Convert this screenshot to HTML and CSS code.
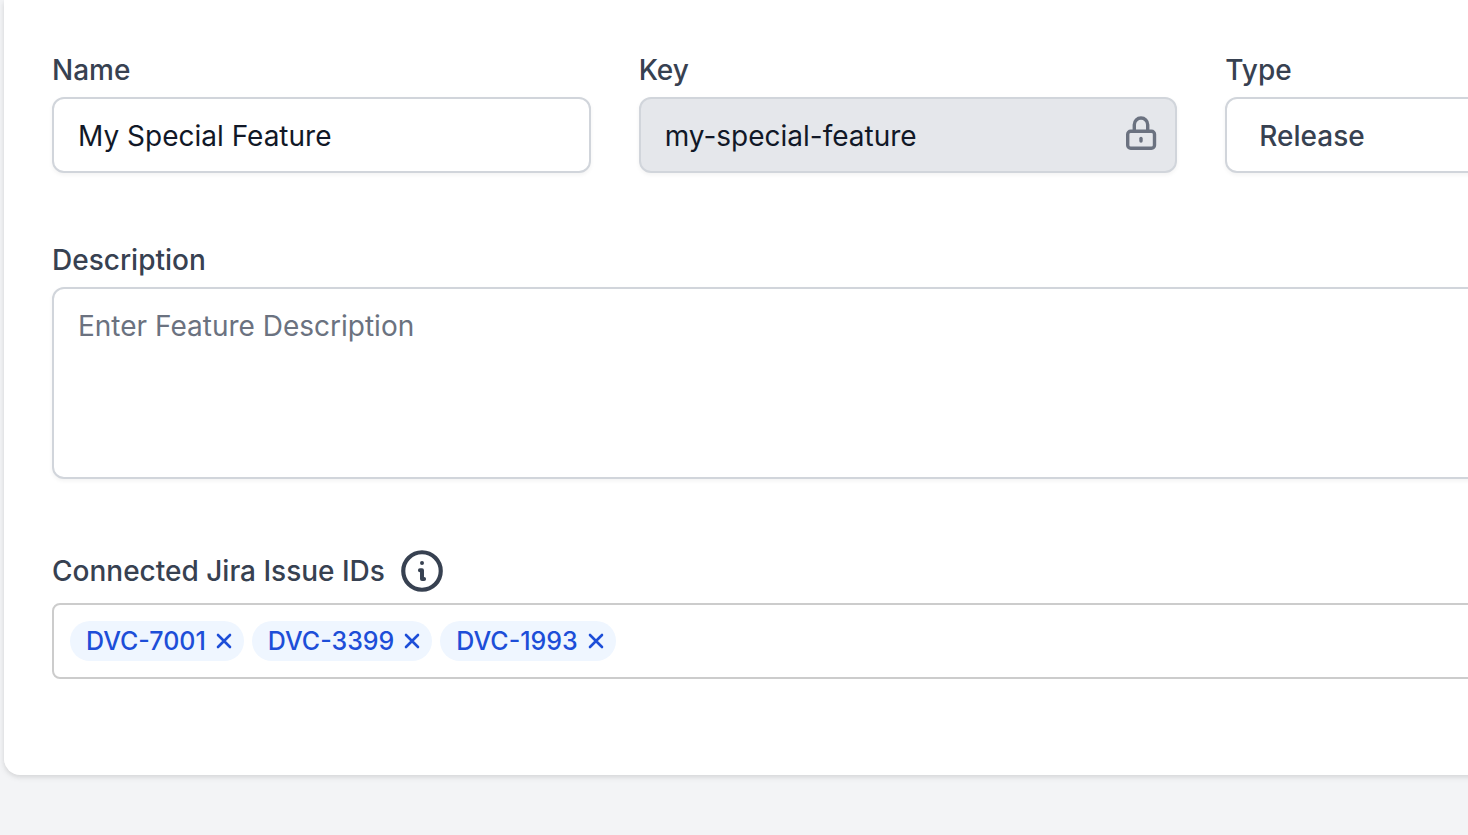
FILE: index.html
```html
<!DOCTYPE html>
<html lang="en">
<head>
  <meta charset="UTF-8" />
  <meta name="viewport" content="width=device-width, initial-scale=1" />
  <title>Feature Settings</title>
  <link rel="stylesheet" href="styles.css">
</head>
<body>
  <form class="card">
    <div class="row">
      <div class="field">
        <label for="name">Name</label>
        <input class="control" type="text" id="name" name="name" value="My Special Feature" />
      </div>

      <div class="field">
        <label for="key">Key</label>
        <div class="locked">
          <input class="control" type="text" id="key" name="key" value="my-special-feature" readonly />
          <svg class="lock-icon" viewBox="0 0 32 36" fill="none" stroke="currentColor" stroke-width="3.4" aria-hidden="true">
            <rect x="2.7" y="16.2" width="26.8" height="17" rx="3" />
            <path d="M9.3 16V9.7a6.7 6.7 0 0 1 13.4 0V16" />
            <path d="M16 23.4v2.6" stroke-linecap="round" />
          </svg>
        </div>
      </div>

      <div class="field">
        <label for="type">Type</label>
        <select class="control type-select" id="type" name="type">
          <option>Release</option>
        </select>
      </div>
    </div>

    <div class="field">
      <label for="description">Description</label>
      <textarea class="control description" id="description" name="description" placeholder="Enter Feature Description"></textarea>
    </div>

    <div class="field">
      <div class="label-row">
        <label for="issues">Connected Jira Issue IDs</label>
        <svg class="info-icon" viewBox="0 0 24 24" fill="none" stroke="currentColor" stroke-width="2" stroke-linecap="round" stroke-linejoin="round" aria-hidden="true">
          <circle cx="12" cy="12" r="9" />
          <path d="M11 11.6h1V15.8h1M12 8.2h.01" stroke-width="1.9" />
        </svg>
      </div>
      <div class="tags">
        <span class="tag">DVC-7001
          <button type="button" class="tag-remove" aria-label="Remove DVC-7001">
            <svg viewBox="0 0 16 16"><path d="M2 2l12 12M14 2L2 14" /></svg>
          </button>
        </span>
        <span class="tag">DVC-3399
          <button type="button" class="tag-remove" aria-label="Remove DVC-3399">
            <svg viewBox="0 0 16 16"><path d="M2 2l12 12M14 2L2 14" /></svg>
          </button>
        </span>
        <span class="tag">DVC-1993
          <button type="button" class="tag-remove" aria-label="Remove DVC-1993">
            <svg viewBox="0 0 16 16"><path d="M2 2l12 12M14 2L2 14" /></svg>
          </button>
        </span>
        <input class="tags-input" type="text" id="issues" name="issues" />
      </div>
    </div>
  </form>
</body>
</html>
```
FILE: styles.css
```css
* {
  box-sizing: border-box;
}

body {
  font-family: Inter, "Liberation Sans", sans-serif;
  font-size: 28px;
  line-height: 40px;
  min-height: 100vh;
  margin: 0;
  background: #f3f4f6;
  color: #374151;
  overflow: hidden;
}

/* the card is wider than the window and runs off its right edge */
.card {
  display: flex;
  flex-direction: column;
  gap: 67px;
  width: calc(100vw + 340px);
  margin-left: 4px;
  padding: 50px 48px 96px;
  background: #fff;
  border-radius: 0 0 16px 16px;
  box-shadow: 0 2px 6px rgba(0,0,0,0.1), 0 2px 4px rgba(0,0,0,0.04);
}

.row {
  display: grid;
  grid-template-columns: repeat(3, 1fr);
  gap: 48px;
}

.field {
  display: flex;
  flex-direction: column;
  gap: 7px;
}

label {
  font-weight: 500;
}

.control {
  display: block;
  width: 100%;
  height: 76px;
  margin: 0;
  padding: 17px 24px 15px;
  font: inherit;
  color: #111827;
  background: #fff;
  border: 2px solid #d1d5db;
  border-radius: 12px;
  box-shadow: 0 2px 4px rgba(0,0,0,0.05);
  outline: none;
}

.locked {
  position: relative;
}

.locked .control {
  background: #e5e7eb;
}

.lock-icon {
  position: absolute;
  top: 18px;
  right: 20px;
  width: 32px;
  height: 36px;
  color: #6b7280;
}

.type-select {
  appearance: none;
  padding: 17px 32px 15px;
  font-weight: 500;
  color: #374151;
}

.description {
  height: 192px;
  resize: none;
}

.description::placeholder {
  color: #6b7280;
  opacity: 1;
}

.label-row {
  display: flex;
  align-items: center;
  gap: 12px;
}

.info-icon {
  width: 50px;
  height: 50px;
}

.tags {
  display: flex;
  align-items: center;
  gap: 8px;
  padding: 16px;
  border: 2px solid #ccc;
  border-radius: 8px;
}

.tag {
  display: flex;
  align-items: center;
  gap: 10px;
  padding: 0 12px 0 16px;
  font-size: 25px;
  font-weight: 500;
  color: #1d4ed8;
  background: #eff6ff;
  border-radius: 20px;
}

.tag-remove {
  display: flex;
  padding: 0;
  color: inherit;
  background: none;
  border: none;
  cursor: pointer;
}

.tag-remove svg {
  width: 16px;
  height: 16px;
  fill: none;
  stroke: currentColor;
  stroke-width: 2.6;
  stroke-linecap: round;
}

.tags-input {
  flex: 1;
  height: 40px;
  padding: 0;
  font: inherit;
  color: inherit;
  background: none;
  border: none;
  outline: none;
}
```
